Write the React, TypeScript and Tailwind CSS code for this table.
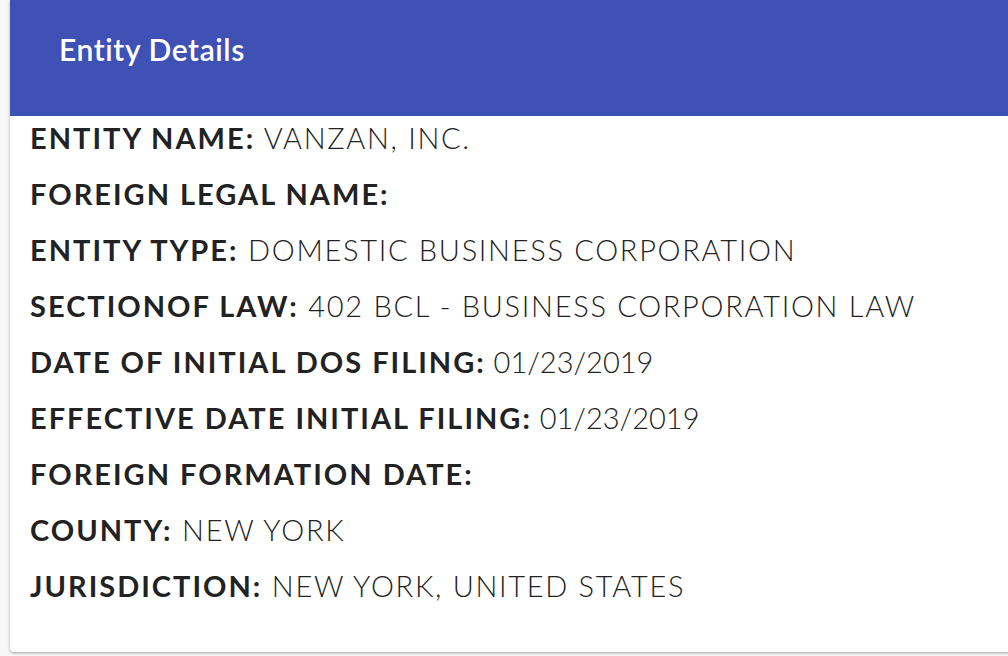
import React from 'react'

interface DetailRow {
  label: string
  value: string
  numeric?: boolean
}

const rows: DetailRow[] = [
  { label: 'ENTITY NAME:', value: 'VANZAN, INC.' },
  { label: 'FOREIGN LEGAL NAME:', value: '' },
  { label: 'ENTITY TYPE:', value: 'DOMESTIC BUSINESS CORPORATION' },
  { label: 'SECTIONOF LAW:', value: '402 BCL - BUSINESS CORPORATION LAW' },
  { label: 'DATE OF INITIAL DOS FILING:', value: '01/23/2019', numeric: true },
  { label: 'EFFECTIVE DATE INITIAL FILING:', value: '01/23/2019', numeric: true },
  { label: 'FOREIGN FORMATION DATE:', value: '' },
  { label: 'COUNTY:', value: 'NEW YORK' },
  { label: 'JURISDICTION:', value: 'NEW YORK, UNITED STATES' },
]

const App: React.FC = () => {
  return (
    <div className="w-[1008px] h-[656px] overflow-hidden bg-[#f7f7f7] font-['Lato',sans-serif]">
      <div className="ml-[10px] w-[1010px] h-[652px] bg-white rounded-b-[4px] shadow-[0_1px_3px_rgba(0,0,0,0.35)]">
        <div className="h-[116px] bg-[#3f51b5] pl-[49px] pt-[29px]">
          <h2 className="text-white text-[30px] leading-[40px] font-semibold tracking-[0.6px]">Entity Details</h2>
        </div>
        <div className="pl-[20px] pt-[2px] flex flex-col gap-4 text-[#222]">
          {rows.map((row) => (
            <div key={row.label} className="text-[29px] leading-[40px] whitespace-nowrap">
              <span className="font-bold tracking-[2px]">{row.label}</span>
              {row.value && (
                <span className={row.numeric ? 'font-light tracking-[0px]' : 'font-light tracking-[1.7px]'}>
                  {' '}
                  {row.value}
                </span>
              )}
            </div>
          ))}
        </div>
      </div>
    </div>
  )
}

export default App
